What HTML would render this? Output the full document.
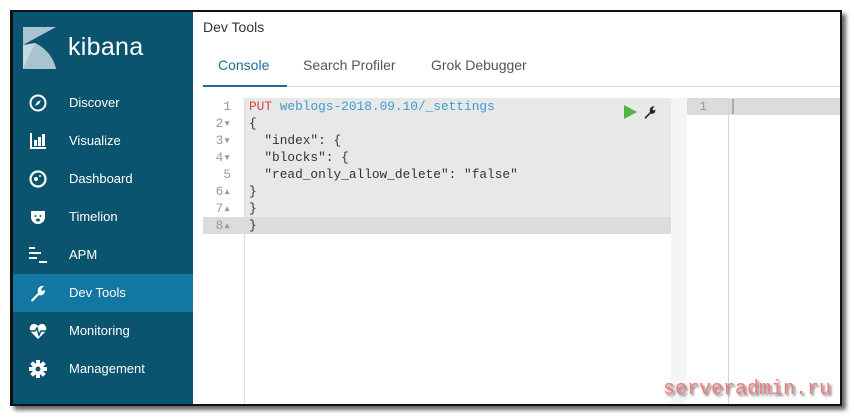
<!DOCTYPE html>
<html><head><meta charset="utf-8"><style>
*{margin:0;padding:0;box-sizing:border-box}
body{width:854px;height:417px;background:#fff;position:relative;overflow:hidden;font-family:"Liberation Sans",sans-serif}
#frame{position:absolute;left:10px;top:10px;width:832px;height:396px;border:2px solid #111;border-left-width:3px;box-shadow:4px 4px 4px rgba(0,0,0,.6);background:#fff;overflow:hidden}
#side{position:absolute;left:0;top:0;width:180px;height:100%;background:#0a546f}
.logo{position:absolute;left:10px;top:15px}
.kib{position:absolute;left:55px;top:21px;color:#fff;font-size:25px;letter-spacing:.3px}
.item{position:absolute;left:0;width:180px;height:38px;color:#fff;font-size:13px;line-height:38px}
.item span{position:absolute;left:56px}
.item svg{position:absolute;left:16px;top:10px}
.act{background:#1377a3}
#main{position:absolute;left:180px;top:0;right:0;bottom:0}
.ttl{position:absolute;left:10px;top:7px;font-size:14px;color:#333}
.tab{position:absolute;top:45px;font-size:14px;color:#555}
.mono{font-family:"Liberation Mono",monospace;font-size:12.8px}
.ln{position:absolute;left:10px;width:42px;text-align:right;padding-right:14px;color:#999;height:17px;line-height:17px}
.cl{position:absolute;left:56px;height:17px;line-height:17px;color:#333;white-space:pre}
</style></head><body>
<div id="frame">
<div id="side">
<svg class="logo" width="33" height="42" viewBox="0 0 33 42"><polygon points="0,0 33,0 0,18" fill="#a9c4cf"/><path d="M0,18 L0,42 L33,42 C30,28 20,20 12,16 Z" fill="#c8d8de"/><path d="M0,42 L12,16 C20,20 30,28 33,42Z" fill="#a9c4cf"/></svg>
<div class="kib">kibana</div>
<div class="item" style="top:72px"><svg width="18" height="18" viewBox="0 0 18 18"><circle cx="9" cy="9" r="7.5" fill="none" stroke="#fff" stroke-width="2"/><polygon points="12,6 10,10 6,12 8,8" fill="#fff"/></svg><span>Discover</span></div>
<div class="item" style="top:110px"><svg width="18" height="18" viewBox="0 0 18 18"><rect x="1" y="1" width="2" height="16" fill="#fff"/><rect x="1" y="15" width="16" height="2" fill="#fff"/><rect x="5" y="8" width="3" height="6" fill="#fff"/><rect x="9" y="5" width="3" height="9" fill="#fff"/><rect x="13" y="2" width="3" height="12" fill="#fff"/></svg><span>Visualize</span></div>
<div class="item" style="top:148px"><svg width="18" height="18" viewBox="0 0 18 18"><circle cx="9" cy="9" r="7.5" fill="none" stroke="#fff" stroke-width="2.2"/><circle cx="7" cy="9" r="2" fill="#fff"/><circle cx="11" cy="6" r="1" fill="#fff"/></svg><span>Dashboard</span></div>
<div class="item" style="top:186px"><svg width="18" height="18" viewBox="0 0 18 18"><path d="M2,3 h14 v6 a7,7 0 0 1 -14,0 Z" fill="#fff"/><circle cx="6.5" cy="8" r="1" fill="#0a546f"/><circle cx="11.5" cy="8" r="1" fill="#0a546f"/><ellipse cx="9" cy="12" rx="2" ry="1.5" fill="#0a546f"/></svg><span>Timelion</span></div>
<div class="item" style="top:224px"><svg width="18" height="18" viewBox="0 0 18 18"><rect x="0" y="1" width="6" height="2" fill="#fff"/><rect x="0" y="6" width="12" height="2" fill="#fff"/><rect x="0" y="11" width="8" height="2" fill="#fff"/><rect x="10" y="15" width="8" height="2" fill="#fff"/></svg><span>APM</span></div>
<div class="item act" style="top:262px"><svg width="18" height="18" viewBox="0 0 18 18"><path d="M2,16 L9,9 C8,5 10,1 15,2 L12,5 L13,7 L16,6 C16,11 12,12 10,11 L3,18Z" fill="#fff"/></svg><span>Dev Tools</span></div>
<div class="item" style="top:300px"><svg width="18" height="18" viewBox="0 0 18 18"><path d="M9,17 L2,10 C-1,6 2,1 6,2 C7.5,2.5 8.5,3.5 9,4 C9.5,3.5 10.5,2.5 12,2 C16,1 19,6 16,10Z" fill="#fff"/><polyline points="1,9 6,9 8,6 10,13 12,9 17,9" fill="none" stroke="#0a546f" stroke-width="1.5"/></svg><span>Monitoring</span></div>
<div class="item" style="top:338px"><svg width="18" height="18" viewBox="0 0 18 18"><g fill="#fff"><circle cx="9" cy="9" r="6"/><rect x="7" y="0" width="4" height="18"/><rect x="0" y="7" width="18" height="4"/><rect x="7" y="0" width="4" height="18" transform="rotate(45 9 9)"/><rect x="7" y="0" width="4" height="18" transform="rotate(-45 9 9)"/></g><circle cx="9" cy="9" r="2.5" fill="#0a546f"/></svg><span>Management</span></div>
</div>
<div id="main">
<div class="ttl">Dev Tools</div>
<div class="tab" style="left:25px;color:#1a6e94">Console</div>
<div class="tab" style="left:110px">Search Profiler</div>
<div class="tab" style="left:238px">Grok Debugger</div>
<div style="position:absolute;left:10px;right:0;top:74px;height:1px;background:#ddd"></div>
<div style="position:absolute;left:10px;width:84px;top:73px;height:2px;background:#1a6e94"></div>
<div style="position:absolute;left:52px;width:426px;top:86px;height:136px;background:#e8e8e8"></div>
<div style="position:absolute;left:10px;width:468px;top:205px;height:17px;background:#dcdcdc"></div>
<div style="position:absolute;left:51px;width:1px;top:86px;height:310px;background:#ddd"></div>
<div style="position:absolute;left:478px;width:16px;top:86px;bottom:0;background:#f5f5f5"></div>
<div style="position:absolute;left:494px;right:0;top:86px;height:17px;background:#dcdcdc"></div>
<div style="position:absolute;left:535px;width:1px;top:86px;bottom:0;background:#d5d5d5"></div>
<div style="position:absolute;left:539px;width:2px;top:87px;height:15px;background:#aaa"></div>
<div class="mono">
<div class="ln" style="left:494px;width:34px;top:86px">1</div>
<div class="ln" style="top:86px">1</div>
<div class="ln" style="top:103px">2▾</div>
<div class="ln" style="top:120px">3▾</div>
<div class="ln" style="top:137px">4▾</div>
<div class="ln" style="top:154px">5</div>
<div class="ln" style="top:171px">6▴</div>
<div class="ln" style="top:188px">7▴</div>
<div class="ln" style="top:205px">8▴</div>
<div class="cl" style="top:86px"><span style="color:#d44">PUT</span> <span style="color:#3a9dd0">weblogs-2018.09.10/_settings</span></div>
<div class="cl" style="top:103px">{</div>
<div class="cl" style="top:120px">  "index": {</div>
<div class="cl" style="top:137px">  "blocks": {</div>
<div class="cl" style="top:154px">  "read_only_allow_delete": "false"</div>
<div class="cl" style="top:171px">}</div>
<div class="cl" style="top:188px">}</div>
<div class="cl" style="top:205px">}</div>
</div>
<svg style="position:absolute;left:430px;top:93px" width="14" height="14"><polygon points="1,0 14,7 1,14" fill="#54b23f"/></svg>
<svg style="position:absolute;left:450px;top:93px" width="14" height="14" viewBox="0 0 18 18"><path d="M2,16 L9,9 C8,5 10,1 15,2 L12,5 L13,7 L16,6 C16,11 12,12 10,11 L3,18Z" fill="#222"/></svg>
<div style="position:absolute;left:470px;top:366px;font-family:'Liberation Mono',monospace;font-size:20px;color:#f07b7b;text-shadow:2px 2px 2px #777">serveradmin.ru</div>
</div>
</div>
</body></html>
